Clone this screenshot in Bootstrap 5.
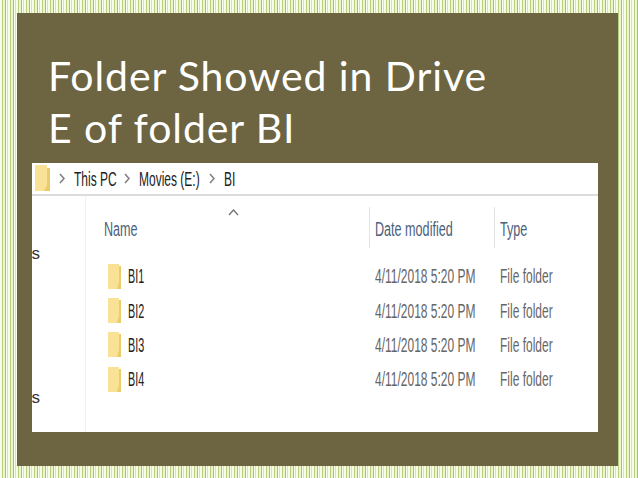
<!DOCTYPE html>
<html lang="en">
<head>
<meta charset="utf-8">
<title>Folder Showed in Drive E of folder BI</title>
<link rel="stylesheet" href="https://cdn.jsdelivr.net/npm/bootstrap@5.3.0/dist/css/bootstrap.min.css">
<style>
html,body{margin:0;height:100%;overflow:hidden}
body{background:repeating-linear-gradient(90deg,#f8fbe6 0 2px,#b4cf7e 2px 3px,#eff6cc 3px 5px,#a3c26a 5px 6px,#fdfef4 6px 7px,#d6e6a6 7px 8px)}
.slide-panel{width:601px;height:453px;margin:13px 0 0 17px;background:#6d6441;padding-top:37px}
.slide-title{margin:0 0 0 31px;font-family:"Lato",sans-serif;font-weight:400;font-size:41px;line-height:52px;color:#fff;height:113px;letter-spacing:.9px}
.shot{width:566px;height:269px;margin-left:14.5px;background:#fff;font-family:"Liberation Sans",sans-serif;color:#333;overflow:hidden}
.sq{display:inline-block;font-size:20px;line-height:24px;transform:scaleX(.6);transform-origin:left center;white-space:nowrap}
.sq-h{transform:scaleX(.63)}
.sq-n{transform:scaleX(.54)}
.crumbs{height:33px;border-bottom:2px solid #dcdcdc;color:#222;padding-left:3px}
.crumbs svg{flex:none}
.crumb-sep{margin:0 9px}
.crumb-a{width:41px}
.crumb-b{width:61px}
.crumb-c{width:11px}
.shot-body{height:236px}
.nav-strip{width:54px;border-right:1px solid #f0f0f0;font-size:17px;color:#333;flex:none;padding-top:40px;height:236px}
.nav-s{height:149px;line-height:36px}
.files{flex:1}
.file-grid{display:grid;grid-template-columns:283px 125px 1fr}
.hdr{height:52px;color:#4c607a;position:relative;padding-top:21px;line-height:24px}
.hdr-cell{padding-left:18px}
.hdr-date{border-left:1px solid #e3e3e3;padding-left:5px;margin-top:-10px;padding-top:10px;height:41px}
.sort-mark{position:absolute;left:142px;top:13px}
.row-name{height:34.4px;color:#222;padding-left:22px;gap:7px;display:flex;align-items:center}
.row-cell{height:34.4px;color:#666;padding-left:6px;display:flex;align-items:center}
.files-rows{margin-top:11px}
</style>
</head>
<body>
<div class="slide-panel">
  <h1 class="slide-title">Folder Showed in Drive<br>E of folder BI</h1>
  <div class="shot">
    <div class="crumbs d-flex align-items-center">
      <svg width="15" height="27" viewBox="0 0 15 27"><path d="M0 0H12V3H15V26H0Z" fill="#f9e196"/><path d="M12 3V20L9 26H15V3Z" fill="#eccb6c"/></svg>
      <svg class="crumb-sep" width="6" height="11" viewBox="0 0 6 11"><path d="M1 1 5 5.5 1 10" fill="none" stroke="#808080" stroke-width="1.6"/></svg>
      <span class="sq crumb-a">This PC</span>
      <svg class="crumb-sep" width="6" height="11" viewBox="0 0 6 11"><path d="M1 1 5 5.5 1 10" fill="none" stroke="#808080" stroke-width="1.6"/></svg>
      <span class="sq crumb-b">Movies (E:)</span>
      <svg class="crumb-sep" width="6" height="11" viewBox="0 0 6 11"><path d="M1 1 5 5.5 1 10" fill="none" stroke="#808080" stroke-width="1.6"/></svg>
      <span class="sq crumb-c">BI</span>
    </div>
    <div class="shot-body d-flex">
      <div class="nav-strip"><div class="nav-s">s</div><div>s</div></div>
      <div class="files">
        <div class="file-grid hdr">
          <div class="hdr-cell"><span class="sq sq-h">Name</span></div>
          <div class="hdr-date"><span class="sq sq-h">Date modified</span></div>
          <div class="hdr-date"><span class="sq sq-h">Type</span></div>
          <svg class="sort-mark" width="11" height="7" viewBox="0 0 11 7"><path d="M1 6 5.5 1 10 6" fill="none" stroke="#777" stroke-width="1.4"/></svg>
        </div>
        <div class="files-rows">
          <div class="file-grid">
            <div class="row-name"><svg width="13" height="25" viewBox="0 0 13 25"><path d="M0 0H11V2H13V25H0Z" fill="#f9e196"/><path d="M11 2V18L9 25H13V2Z" fill="#eccb6c"/></svg><span class="sq sq-n">BI1</span></div>
            <div class="row-cell"><span class="sq">4/11/2018 5:20 PM</span></div><div class="row-cell"><span class="sq">File folder</span></div>
            <div class="row-name"><svg width="13" height="25" viewBox="0 0 13 25"><path d="M0 0H11V2H13V25H0Z" fill="#f9e196"/><path d="M11 2V18L9 25H13V2Z" fill="#eccb6c"/></svg><span class="sq sq-n">BI2</span></div>
            <div class="row-cell"><span class="sq">4/11/2018 5:20 PM</span></div><div class="row-cell"><span class="sq">File folder</span></div>
            <div class="row-name"><svg width="13" height="25" viewBox="0 0 13 25"><path d="M0 0H11V2H13V25H0Z" fill="#f9e196"/><path d="M11 2V18L9 25H13V2Z" fill="#eccb6c"/></svg><span class="sq sq-n">BI3</span></div>
            <div class="row-cell"><span class="sq">4/11/2018 5:20 PM</span></div><div class="row-cell"><span class="sq">File folder</span></div>
            <div class="row-name"><svg width="13" height="25" viewBox="0 0 13 25"><path d="M0 0H11V2H13V25H0Z" fill="#f9e196"/><path d="M11 2V18L9 25H13V2Z" fill="#eccb6c"/></svg><span class="sq sq-n">BI4</span></div>
            <div class="row-cell"><span class="sq">4/11/2018 5:20 PM</span></div><div class="row-cell"><span class="sq">File folder</span></div>
          </div>
        </div>
      </div>
    </div>
  </div>
</div>
<script src="https://cdn.jsdelivr.net/npm/bootstrap@5.3.0/dist/js/bootstrap.bundle.min.js"></script>
</body>
</html>
